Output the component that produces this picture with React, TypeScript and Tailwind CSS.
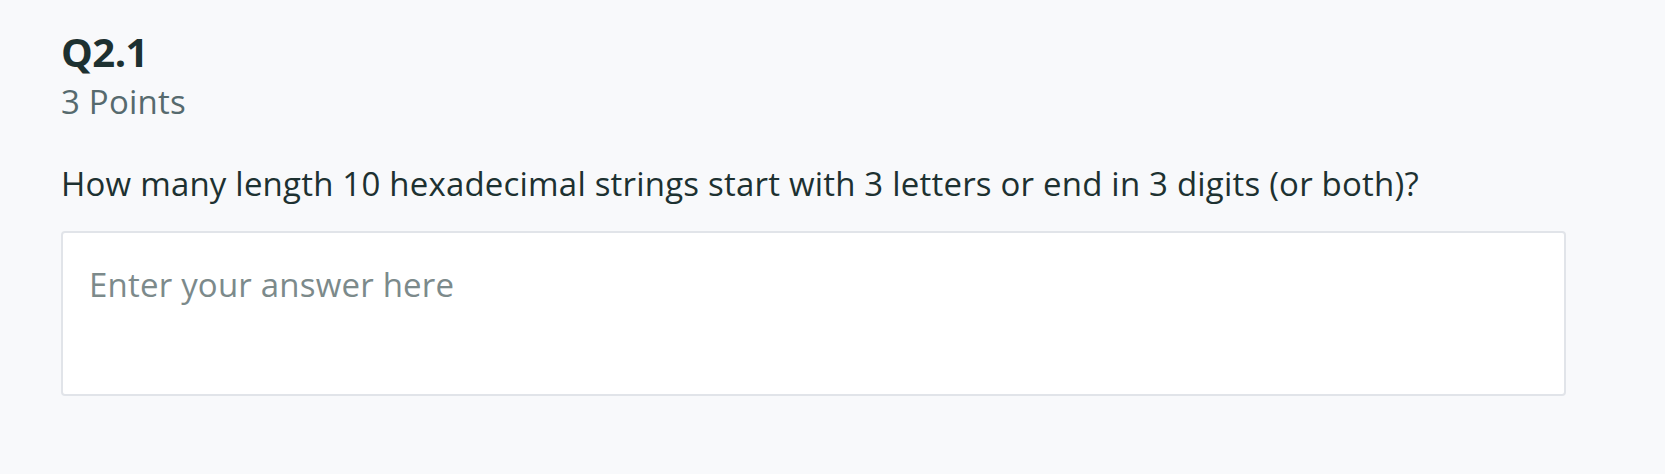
export default function App() {
  return (
    <div className="min-h-[474px] w-full bg-[#f8f9fb] px-[61px] pt-[26px] font-['Open_Sans',sans-serif]">
      <div className="text-[40px] font-bold leading-[52px] tracking-[-0.5px] text-[#1d3131]">Q2.1</div>
      <div className="mt-[4px] text-[33px] leading-[40px] tracking-[0.2px] text-[#566a6e]">3 Points</div>
      <p className="mt-[42px] text-[33px] leading-[40px] tracking-[0.2px] text-[#1d3131]">
        How many length 10 hexadecimal strings start with 3 letters or end in 3 digits (or both)?
      </p>
      <textarea
        placeholder="Enter your answer here"
        className="mt-[27px] block h-[165px] w-[1505px] resize-none rounded-[4px] border-2 border-[#e1e4e9] bg-white px-[26px] pt-[32px] text-[33px] leading-[40px] tracking-[0.2px] text-[#1d3131] outline-none placeholder:text-[#7c8a8b]"
      />
    </div>
  );
}
